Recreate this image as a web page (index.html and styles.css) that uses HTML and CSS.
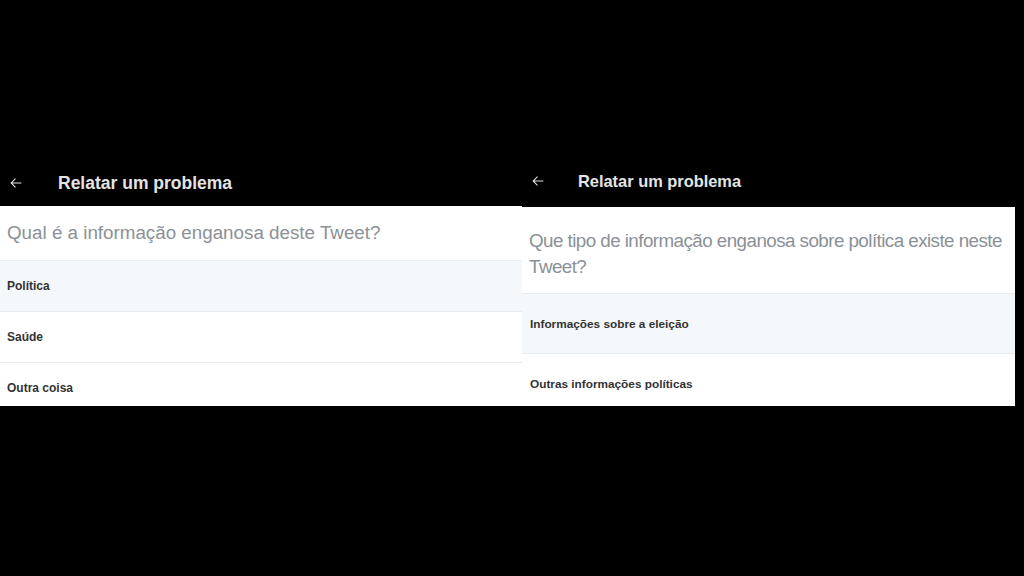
FILE: index.html
```html
<!DOCTYPE html>
<html lang="pt">
<head>
    <meta charset="UTF-8">
    <meta name="viewport" content="width=device-width, initial-scale=1.0">
    <title>Relatar um problema</title>
    <link rel="stylesheet" href="styles.css">
</head>
<body>
    <div class="telas">
        <section class="painel painel-esq">
            <header class="cabecalho">
                <svg class="voltar" viewBox="0 0 24 24" width="16" height="16"><path d="M20 11.2H6.6l5.2-5.2-1.1-1.1L3.6 12l7.1 7.1 1.1-1.1-5.2-5.2H20z" fill="#e6e6e6"/></svg>
                <h1>Relatar um problema</h1>
            </header>
            <div class="conteudo">
                <p class="pergunta">Qual é a informação enganosa deste Tweet?</p>
                <div class="opcao ativa">Política</div>
                <div class="opcao">Saúde</div>
                <div class="opcao">Outra coisa</div>
            </div>
        </section>
        <section class="painel painel-dir">
            <header class="cabecalho">
                <svg class="voltar" viewBox="0 0 24 24" width="16" height="16"><path d="M20 11.2H6.6l5.2-5.2-1.1-1.1L3.6 12l7.1 7.1 1.1-1.1-5.2-5.2H20z" fill="#e6e6e6"/></svg>
                <h1>Relatar um problema</h1>
            </header>
            <div class="conteudo">
                <p class="pergunta">Que tipo de informação enganosa sobre política existe neste Tweet?</p>
                <div class="opcao ativa">Informações sobre a eleição</div>
                <div class="opcao">Outras informações políticas</div>
            </div>
        </section>
    </div>
</body>
</html>
```

FILE: styles.css
```css
body { margin: 0; background: #000; font-family: "Liberation Sans", Arial, sans-serif; }
.telas { display: flex; padding-top: 160px; }
.painel { display: flex; flex-direction: column; }
.painel-esq { width: 522px; }
.painel-dir { width: 493px; }
.cabecalho { height: 46px; display: flex; align-items: center; padding-left: 8px; }
.painel-dir .cabecalho { height: 47px; align-items: flex-start; padding-top: 13px; box-sizing: border-box; }
.cabecalho h1 { margin: 0 0 0 34px; font-size: 17.5px; font-weight: bold; color: #e4e4e4; }
.painel-dir .cabecalho h1 { margin-left: 32px; font-size: 16.4px; margin-top: -1px; }
.voltar { display: block; }
.conteudo { background: #fff; height: 200px; overflow: hidden; }
.painel-dir .conteudo { height: 199px; }
.pergunta { margin: 0; padding: 0 4px 0 7px; height: 54px; display: flex; align-items: center; font-size: 18.8px; color: #8b9197; border-bottom: 1px solid #e6ecf0; }
.painel-dir .pergunta { height: 87px; line-height: 26px; align-items: flex-start; padding: 21px 0 0 7px; box-sizing: border-box; letter-spacing: -0.55px; }
.opcao { height: 50px; display: flex; align-items: center; padding-left: 7px; font-size: 12px; font-weight: bold; color: #333; border-bottom: 1px solid #e6ecf0; }
.painel-dir .opcao { height: 59px; padding-left: 8px; font-size: 11.8px; }
.opcao.ativa { background: #f5f8fa; }
```
